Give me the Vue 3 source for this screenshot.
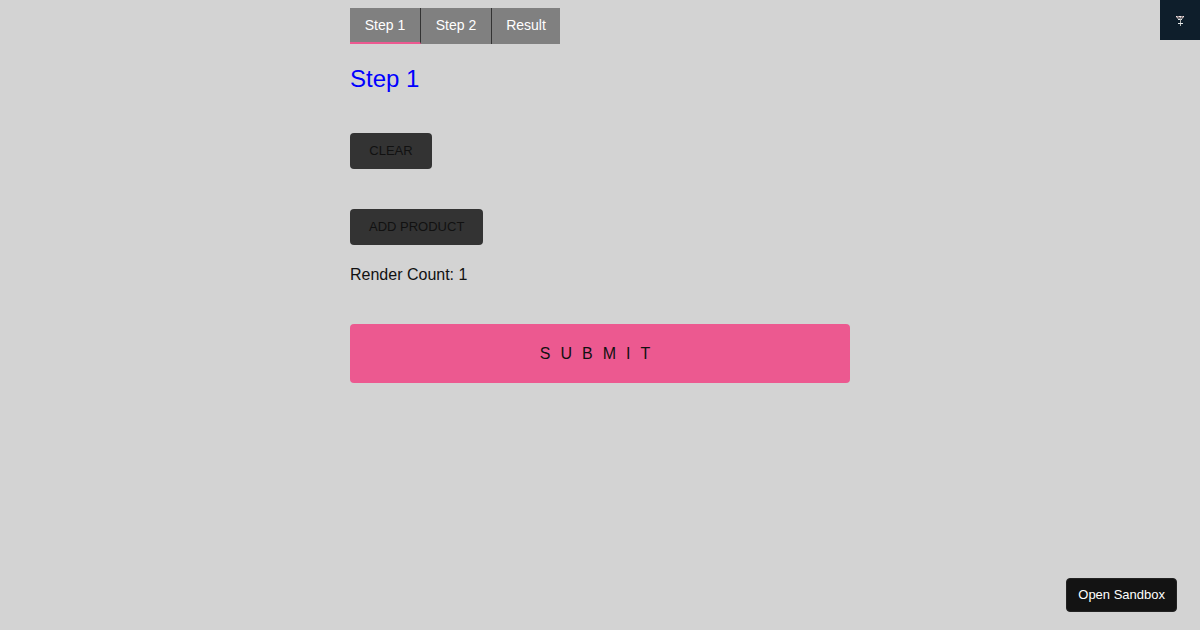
<script setup>
import { ref } from 'vue'

const tabs = ['Step 1', 'Step 2', 'Result']
const current = ref(0)
const renderCount = 1
</script>

<template>
  <main class="page">
    <nav class="tabs" aria-label="Steps">
      <a
        v-for="(tab, i) in tabs"
        :key="tab"
        href="#"
        class="tab"
        :class="{ active: i === current }"
        @click.prevent="current = i"
      >{{ tab }}</a>
    </nav>
    <form class="form" @submit.prevent>
      <h2 class="title">{{ tabs[current] }}</h2>
      <button type="button" class="dark">CLEAR</button>
      <button type="button" class="dark">ADD PRODUCT</button>
      <p class="count">Render Count: {{ renderCount }}</p>
      <button type="submit" class="submit">SUBMIT</button>
    </form>
  </main>
  <button type="button" class="corner" aria-label="Tools">
    <svg width="10" height="10" viewBox="0 0 10 10" fill="none" shape-rendering="crispEdges">
      <path d="M1 0.5H9" stroke="#a89798" />
      <path d="M1 0.5H2M4 0.5H6M8 0.5H9" stroke="#f4eeee" />
      <path d="M1 1.5H9" stroke="#6b6065" />
      <path d="M2 1.5H3M5 1.5H6M7 1.5H8" stroke="#b5aeb1" />
      <path d="M2 2.5H8" stroke="#6c7077" />
      <path d="M3 3.5H7" stroke="#dce2e2" />
      <path d="M5.5 3V10" stroke="#b4b6b5" />
      <path d="M3 7.5H8" stroke="#e6ebeb" />
    </svg>
  </button>
  <button type="button" class="sandbox">Open Sandbox</button>
</template>

<style>
body {
  margin: 0;
  background: #d3d3d3;
  font-family: "Liberation Sans", Arial, Helvetica, sans-serif;
}
</style>

<style scoped>
.page {
  max-width: 500px;
  margin: 0 auto;
  padding-top: 8px;
}
button {
  font-family: inherit;
  border: 0;
  cursor: pointer;
}
.tabs {
  display: grid;
  grid-template-columns: 71px 71px 68px;
}
.tab {
  box-sizing: border-box;
  height: 36px;
  border-right: 1px solid #333;
  background: #808080;
  color: #fff;
  font-size: 14px;
  line-height: 34px;
  text-align: center;
  text-decoration: none;
}
.tab:last-child {
  border-right: 0;
}
.tab.active {
  border-bottom: 2px solid #ec5990;
}
.form {
  display: flex;
  flex-direction: column;
  align-items: flex-start;
}
.title {
  margin: 20px 0 0;
  color: #00f;
  font-size: 24px;
  line-height: 29px;
  font-weight: 400;
}
.dark {
  min-width: 82px;
  height: 36px;
  margin-top: 40px;
  padding: 0 19px 2px;
  border-radius: 4px;
  background: #333;
  color: #111;
  font-size: 13px;
}
.count {
  margin: 20px 0 0;
  color: #111;
  font-size: 16px;
  line-height: 19px;
}
.submit {
  width: 100%;
  margin-top: 40px;
  padding: 20px;
  border-radius: 4px;
  background: #ec5990;
  color: #111;
  font-size: 16px;
  line-height: 19px;
  letter-spacing: 10px;
}
.corner {
  position: fixed;
  top: 0;
  right: 0;
  display: flex;
  align-items: center;
  justify-content: center;
  width: 40px;
  height: 40px;
  padding: 2px 0 0;
  background: #0e1e2b;
}
.sandbox {
  position: fixed;
  right: 23px;
  bottom: 18px;
  height: 34px;
  padding: 0 11px 2px;
  border: 1px solid #222;
  border-radius: 4px;
  background: #131313;
  color: #fff;
  font-size: 13px;
}
</style>
